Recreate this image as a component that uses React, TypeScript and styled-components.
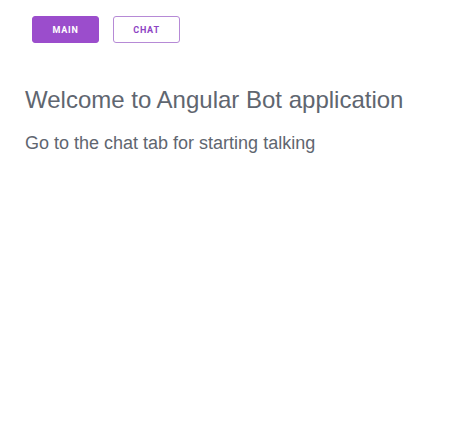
import React from "react";
import styled, { createGlobalStyle } from "styled-components";

const GlobalStyle = createGlobalStyle`
  html, body {
    margin: 0;
    padding: 0;
    background: #ffffff;
    font-family: "Liberation Sans", Arial, sans-serif;
  }
`;

const Page = styled.div`
  padding: 16px 25px;
`;

const Nav = styled.nav`
  display: flex;
  gap: 14px;
  padding-left: 7px;
`;

const TabButton = styled.button<{ $active?: boolean }>`
  width: 67px;
  height: 27px;
  box-sizing: border-box;
  border-radius: 3px;
  border: 1.5px solid ${p => (p.$active ? "#9b4dcc" : "#b68ad6")};
  background: ${p => (p.$active ? "#9b4dcc" : "#ffffff")};
  color: ${p => (p.$active ? "#ffffff" : "#8e44c4")};
  font-family: "Roboto", "Liberation Sans", sans-serif;
  font-weight: 700;
  font-size: 9px;
  letter-spacing: 0.8px;
  padding: 0;
  cursor: pointer;
`;

const Title = styled.h1`
  margin: 43px 0 0;
  font-size: 24px;
  font-weight: 400;
  color: #5f6670;
`;

const Subtitle = styled.h2`
  margin: 19px 0 0;
  font-size: 18px;
  font-weight: 400;
  color: #5f6670;
`;

export default function App() {
  return (
    <>
      <GlobalStyle />
      <Page>
        <Nav>
          <TabButton $active>MAIN</TabButton>
          <TabButton>CHAT</TabButton>
        </Nav>
        <Title>Welcome to Angular Bot application</Title>
        <Subtitle>Go to the chat tab for starting talking</Subtitle>
      </Page>
    </>
  );
}
